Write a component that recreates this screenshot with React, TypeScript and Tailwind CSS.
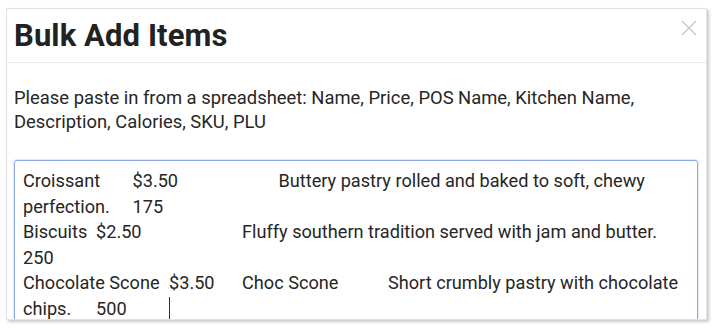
import React from "react"

const rows =
  "Croissant\t$3.50\t\t\tButtery pastry rolled and baked to soft, chewy perfection.\t175\n" +
  "Biscuits\t$2.50\t\t\tFluffy southern tradition served with jam and butter.\t250\n" +
  "Chocolate Scone\t$3.50\tChoc Scone\t\tShort crumbly pastry with chocolate chips.\t500\t\t"

export default function App() {
  return (
    <div className="w-[716px] h-[330px] overflow-hidden bg-white pt-[8px] pl-[6px] font-['Roboto',sans-serif] text-[#262626]">
      <div className="w-[701px] h-[312px] bg-white border border-[#e3e3e3] shadow-[2px_2px_3px_rgba(0,0,0,0.22)] overflow-hidden">
        <div className="h-[54px] flex items-center justify-between pl-[7px] pr-[9px] border-b border-[#e8e8ee]">
          <h2 className="text-[31px] font-bold text-[#222] leading-none tracking-[0.1px]">Bulk Add Items</h2>
          <button className="self-start mt-[11px] text-[#c6c6c6]" aria-label="Close">
            <svg width="16" height="16" viewBox="0 0 16 16" fill="none" stroke="currentColor" strokeWidth="1.4">
              <path d="M1 1L15 15M15 1L1 15" />
            </svg>
          </button>
        </div>
        <div className="px-[7px] pt-[23px]">
          <p className="text-[18.4px] leading-[24px]">
            Please paste in from a spreadsheet: Name, Price, POS Name, Kitchen Name, Description, Calories, SKU, PLU
          </p>
          <div
            role="textbox"
            className="mt-[26px] w-[684px] h-[200px] border border-[#8ea6ec] rounded-[3px] shadow-[0_0_0_1px_rgba(142,166,236,0.25)] px-[8px] pt-[7px] text-[18.15px] leading-[25.6px] whitespace-pre-wrap [tab-size:36.5px]"
          >
            {rows}
            <span className="inline-block w-px h-[24px] bg-[#333] align-[-6px]" />
          </div>
        </div>
      </div>
    </div>
  )
}
